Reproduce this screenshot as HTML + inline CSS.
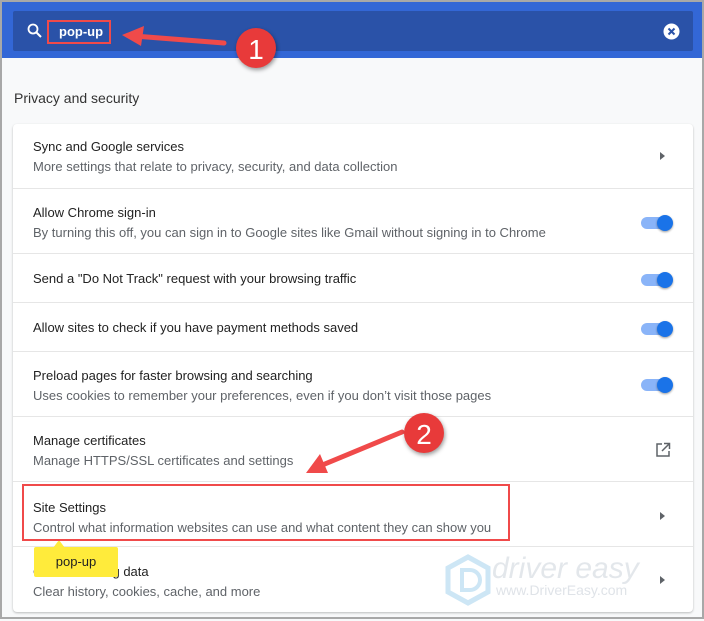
<!DOCTYPE html>
<html><head><meta charset="utf-8"><style>
*{margin:0;padding:0;box-sizing:border-box}
body{width:704px;height:619px;overflow:hidden;background:#f8f9fa;font-family:"Liberation Sans",Arial,sans-serif;position:relative;border:2px solid #a8a8a8;border-top-width:2px}
.hdr{position:absolute;left:0;top:0;width:700px;height:56px;background:#3367d6}
.sb{position:absolute;left:11px;top:9px;width:680px;height:40px;background:#2a52a8;border-radius:2px}
.title{position:absolute;left:12px;top:88px;font-size:14px;color:#333}
.card{position:absolute;left:11px;top:122px;width:680px;height:488px;background:#fff;border-radius:4px;box-shadow:0 1px 2px rgba(0,0,0,.25)}
.row{position:absolute;left:0;width:680px;border-top:1px solid #e6e6e6}
.row:first-child{border-top:none}
.t1{position:absolute;left:20px;font-size:13px;color:#222}
.t2{position:absolute;left:20px;font-size:13px;color:#5f6368}
.arr{position:absolute;right:28px;width:0;height:0;border-left:5px solid #5f6368;border-top:4px solid transparent;border-bottom:4px solid transparent}
.tg{position:absolute;right:20px;width:32px;height:16px}
.tg .tr{position:absolute;left:0;top:3px;width:28px;height:12px;border-radius:6px;background:#8ab4f8}
.tg .kn{position:absolute;left:16px;top:1px;width:16px;height:16px;border-radius:50%;background:#1a73e8;box-shadow:0 1px 2px rgba(0,0,0,.4)}
</style></head><body>
<div class="hdr"></div>
<div class="sb">
<svg style="position:absolute;left:14px;top:12px" width="16" height="16" viewBox="0 0 16 16"><circle cx="6" cy="6" r="4.5" fill="none" stroke="#fff" stroke-width="1.8"/><path d="M9.5 9.5L14 14" stroke="#fff" stroke-width="2"/></svg>
<div style="position:absolute;left:34px;top:9px;width:64px;height:24px;border:2px solid #f04a4a"></div>
<div style="position:absolute;left:46px;top:13px;font-size:13px;font-weight:bold;color:#fff">pop-up</div>
<svg style="position:absolute;left:650px;top:12px" width="17" height="17" viewBox="0 0 17 17"><circle cx="8.5" cy="8.5" r="8" fill="#fff"/><path d="M5.5 5.5L11.5 11.5M11.5 5.5L5.5 11.5" stroke="#2a52a8" stroke-width="2"/></svg>
</div>
<div class="title">Privacy and security</div>
<div class="card">
<div class="row" style="top:0;height:64px"><div class="t1" style="top:15px">Sync and Google services</div><div class="t2" style="top:35px">More settings that relate to privacy, security, and data collection</div><div class="arr" style="top:28px"></div></div>
<div class="row" style="top:64px;height:65px"><div class="t1" style="top:16px">Allow Chrome sign-in</div><div class="t2" style="top:36px">By turning this off, you can sign in to Google sites like Gmail without signing in to Chrome</div><div class="tg" style="top:25px"><div class="tr"></div><div class="kn"></div></div></div>
<div class="row" style="top:129px;height:49px"><div class="t1" style="top:17px">Send a "Do Not Track" request with your browsing traffic</div><div class="tg" style="top:17px"><div class="tr"></div><div class="kn"></div></div></div>
<div class="row" style="top:178px;height:49px"><div class="t1" style="top:17px">Allow sites to check if you have payment methods saved</div><div class="tg" style="top:17px"><div class="tr"></div><div class="kn"></div></div></div>
<div class="row" style="top:227px;height:65px"><div class="t1" style="top:16px">Preload pages for faster browsing and searching</div><div class="t2" style="top:36px">Uses cookies to remember your preferences, even if you don’t visit those pages</div><div class="tg" style="top:24px"><div class="tr"></div><div class="kn"></div></div></div>
<div class="row" style="top:292px;height:65px"><div class="t1" style="top:16px">Manage certificates</div><div class="t2" style="top:36px">Manage HTTPS/SSL certificates and settings</div>
<svg style="position:absolute;right:22px;top:25px" width="16" height="16" viewBox="0 0 16 16"><path d="M7 2H2v12h12V9" fill="none" stroke="#5f6368" stroke-width="1.5"/><path d="M9 1.5h5.5V7M14.5 1.5L7 9" fill="none" stroke="#5f6368" stroke-width="1.5"/></svg></div>
<div class="row" style="top:357px;height:65px"><div class="t1" style="top:18px">Site Settings</div><div class="t2" style="top:38px">Control what information websites can use and what content they can show you</div><div class="arr" style="top:30px"></div></div>
<div class="row" style="top:422px;height:66px"><div class="t1" style="top:17px">Clear browsing data</div><div class="t2" style="top:37px">Clear history, cookies, cache, and more</div><div class="arr" style="top:29px"></div></div>
</div>
<!-- watermark -->
<svg style="position:absolute;left:442px;top:552px" width="48" height="52" viewBox="0 0 48 52"><path d="M24 3L44 14V38L24 49L4 38V14Z" fill="none" stroke="#cde6f5" stroke-width="5"/><path d="M18 16h8a8 8 0 010 20h-8z" fill="none" stroke="#cde6f5" stroke-width="4"/></svg>
<div style="position:absolute;left:490px;top:550px;font-size:30px;font-style:italic;color:#dfe3e8;opacity:.85">driver easy</div>
<div style="position:absolute;left:494px;top:580px;font-size:14px;color:#dfe3e8">www.DriverEasy.com</div>
<!-- popup tooltip -->
<div style="position:absolute;left:51px;top:538px;width:0;height:0;border-left:6px solid transparent;border-right:6px solid transparent;border-bottom:8px solid #ffeb3b"></div>
<div style="position:absolute;left:32px;top:545px;width:84px;height:30px;background:#ffeb3b;border-radius:2px;font-size:13px;color:#222;text-align:center;line-height:30px">pop-up</div>
<!-- red box 2 -->
<div style="position:absolute;left:20px;top:482px;width:488px;height:57px;border:2px solid #f04a4a"></div>
<!-- arrows -->
<svg style="position:absolute;left:0;top:0" width="704" height="619">
<path d="M222 41L132 34" stroke="#f04a4a" stroke-width="5" stroke-linecap="round"/>
<path d="M120 33L142 24L139 44Z" fill="#f04a4a"/>
<path d="M400 430L318 464" stroke="#f04a4a" stroke-width="5" stroke-linecap="round"/>
<path d="M304 471L318 452L326 471Z" fill="#f04a4a"/>
<circle cx="254" cy="46" r="20" fill="#e83a3a" style="filter:drop-shadow(1px 2px 2px rgba(0,0,0,.4))"/>
<text x="254" y="57" text-anchor="middle" font-family="Liberation Sans" font-size="28" fill="#fff">1</text>
<circle cx="422" cy="431" r="20" fill="#e83a3a" style="filter:drop-shadow(1px 2px 2px rgba(0,0,0,.4))"/>
<text x="422" y="442" text-anchor="middle" font-family="Liberation Sans" font-size="28" fill="#fff">2</text>
</svg>
</body></html>
